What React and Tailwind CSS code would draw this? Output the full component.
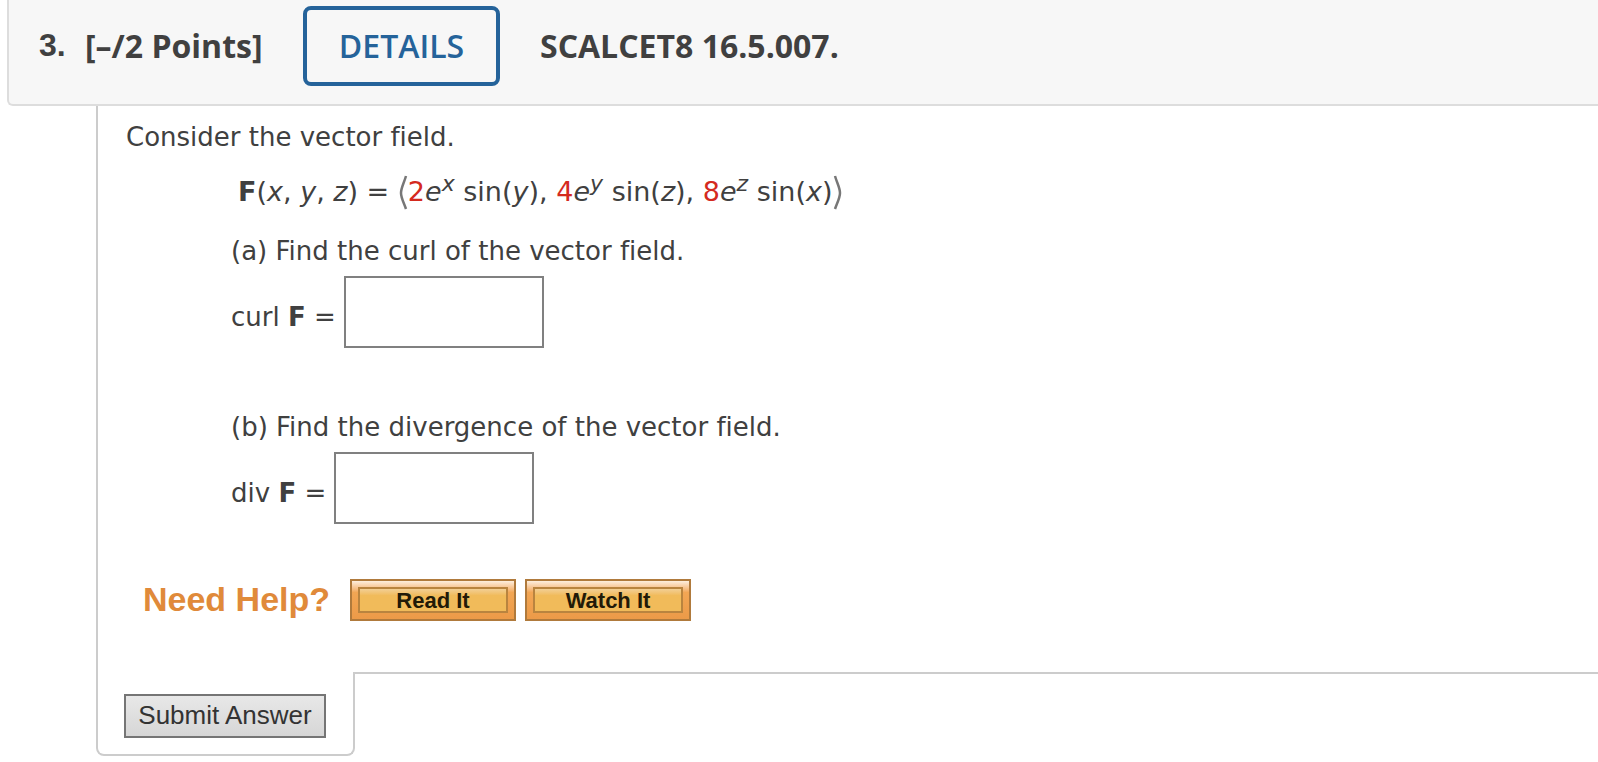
import React, { useState } from "react";

const Term = ({ coefficient, exponent, variable }) => (
  <>
    <span className="text-[#d42a1e]">{coefficient}</span>
    <i>e</i>
    <sup className="text-[22px] top-[-10px]">
      <i>{exponent}</i>
    </sup>{" "}
    sin(<i>{variable}</i>)
  </>
);

const AngleBracket = ({ right }) => (
  <svg
    className={right ? "inline-block -scale-x-100" : "inline-block"}
    width="10"
    height="36"
    viewBox="0 0 10 36"
    fill="none"
    stroke="#777"
    strokeWidth="2.5"
  >
    <path d="M8 2C6 9 3 14 3 19s3 10 5 16" />
  </svg>
);

const AnswerRow = ({ id, name, value, onChange }) => (
  <div className="flex items-end gap-2">
    <label htmlFor={id} className="pb-[15px]">
      {name} <b>F</b> =
    </label>
    <input
      id={id}
      type="text"
      value={value}
      onChange={onChange}
      className="w-[200px] h-[72px] px-2 border-2 border-[#808080] bg-white"
    />
  </div>
);

const HelpButton = ({ children }) => (
  <button
    type="button"
    className="w-[166px] h-[42px] p-[6px] border-2 border-[#b07a3c] bg-linear-to-b from-[#fdeedd] via-[#f2a654] via-30% to-[#ec9a48]"
  >
    <span className="flex h-full pt-[2px] items-center justify-center border-2 border-[#b9843f] bg-linear-to-b from-[#f3cf94] to-[#f1bb5a] to-30% text-[22px] text-[#221a08] font-bold">
      {children}
    </span>
  </button>
);

const App = () => {
  const [curl, setCurl] = useState("");
  const [div, setDiv] = useState("");

  return (
    <div className="overflow-hidden bg-white text-[#404040]">
      <header className="ml-[7px] h-[106px] pl-[30px] pb-3 flex items-center border-l-2 border-b-2 border-[#ddd] rounded-bl-md bg-[#f7f7f7] text-[32px] font-bold font-['Open_Sans',sans-serif] whitespace-nowrap">
        <span className="w-[46px] pb-[2px] font-['Liberation_Sans',sans-serif]">
          3.
        </span>
        <span className="w-[218px]">[–/2 Points]</span>
        <button
          type="button"
          className="w-[197px] h-[80px] mr-10 border-4 border-[#25639a] rounded-lg text-[#25639a] font-semibold"
        >
          DETAILS
        </button>
        <h1>SCALCET8 16.5.007.</h1>
      </header>

      <form
        onSubmit={(e) => e.preventDefault()}
        className="ml-[96px] font-['DejaVu_Sans',sans-serif] text-[26px] leading-8 [font-variant-ligatures:none]"
      >
        <div className="h-[566px] pt-[15px] pl-7 border-l-2 border-[#ccc]">
          <p>Consider the vector field.</p>
          <p className="mt-[23px] ml-[112px] flex items-center h-8 text-[27px] whitespace-pre">
            <span>
              <b>F</b>(<i>x</i>, <i>y</i>, <i>z</i>) ={" "}
            </span>
            <AngleBracket />
            <span>
              <Term coefficient="2" exponent="x" variable="y" />,{" "}
              <Term coefficient="4" exponent="y" variable="z" />,{" "}
              <Term coefficient="8" exponent="z" variable="x" />
            </span>
            <AngleBracket right />
          </p>

          <div className="ml-[105px] mt-[27px]">
            <p className="mb-[9px]">(a) Find the curl of the vector field.</p>
            <AnswerRow
              id="curl"
              name="curl"
              value={curl}
              onChange={(e) => setCurl(e.target.value)}
            />
            <p className="mt-[63px] mb-[9px]">
              (b) Find the divergence of the vector field.
            </p>
            <AnswerRow
              id="div"
              name="div"
              value={div}
              onChange={(e) => setDiv(e.target.value)}
            />
          </div>

          <div className="mt-[55px] ml-[17px] flex items-center gap-[9px] font-['Liberation_Sans',sans-serif]">
            <span className="w-[198px] pb-[2px] text-[34px] text-[#e08a3a] font-bold">
              Need Help?
            </span>
            <HelpButton>Read It</HelpButton>
            <HelpButton>Watch It</HelpButton>
          </div>
        </div>

        <div className="flex">
          <div className="w-[259px] h-[84px] pt-[22px] pl-[26px] border-2 border-t-0 border-[#ccc] rounded-b-lg">
            <button
              type="submit"
              className="w-[202px] h-[44px] pb-[2px] border-2 border-[#757575] bg-linear-to-b from-[#e8e8e8] to-[#d6d6d6] text-[#333] font-['Liberation_Sans',sans-serif]"
            >
              Submit Answer
            </button>
          </div>
          <div className="flex-1 -ml-[2px] border-t-2 border-[#ccc]" />
        </div>
      </form>
    </div>
  );
};

export default App;
